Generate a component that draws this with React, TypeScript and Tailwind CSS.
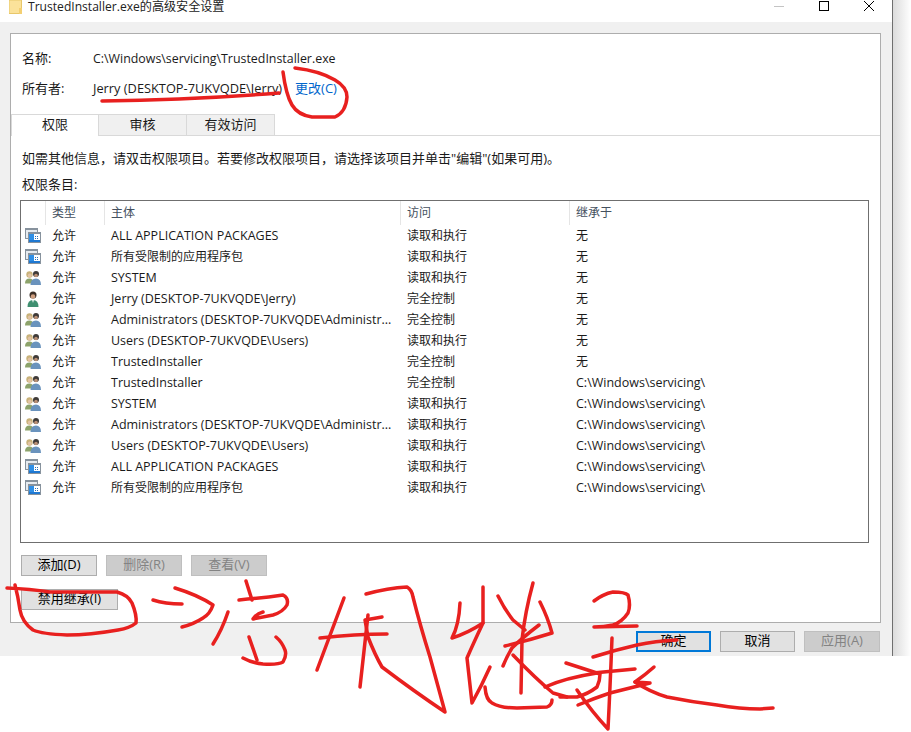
const ALL = 'ALL APPLICATION PACKAGES'
const LIMITED = '所有受限制的应用程序包'
const ADMINS = 'Administrators (DESKTOP-7UKVQDE\\Administr...'
const USERS = 'Users (DESKTOP-7UKVQDE\\Users)'
const READ = '读取和执行'
const FULL = '完全控制'
const PARENT = 'C:\\Windows\\servicing\\'

type Kind = 'app' | 'group' | 'user'

const rows: { kind: Kind; name: string; access: string; from: string }[] = [
  { kind: 'app', name: ALL, access: READ, from: '无' },
  { kind: 'app', name: LIMITED, access: READ, from: '无' },
  { kind: 'group', name: 'SYSTEM', access: READ, from: '无' },
  { kind: 'user', name: 'Jerry (DESKTOP-7UKVQDE\\Jerry)', access: FULL, from: '无' },
  { kind: 'group', name: ADMINS, access: FULL, from: '无' },
  { kind: 'group', name: USERS, access: READ, from: '无' },
  { kind: 'group', name: 'TrustedInstaller', access: FULL, from: '无' },
  { kind: 'group', name: 'TrustedInstaller', access: FULL, from: PARENT },
  { kind: 'group', name: 'SYSTEM', access: READ, from: PARENT },
  { kind: 'group', name: ADMINS, access: READ, from: PARENT },
  { kind: 'group', name: USERS, access: READ, from: PARENT },
  { kind: 'app', name: ALL, access: READ, from: PARENT },
  { kind: 'app', name: LIMITED, access: READ, from: PARENT },
]

// hand-written marks over the screenshot
const strokes = [
  'M102 101 Q190 100 279 93',
  'M283 72 Q286 95 292 105 Q298 115 312 117 L335 117 Q346 112 347 97 Q347 87 335 80 Q320 71 295 68',
  'M7 588 Q30 589 50 592 L117 592 Q128 595 132 603 Q137 615 136 623 Q130 628 118 630 Q90 635 67 635 Q42 634 33 630 Q22 622 20 610 Q18 596 15 585',
  'M153 600 Q165 604 182 604',
  'M175 588 Q198 595 213 605 Q210 614 203 618 Q194 624 182 627',
  'M228 612 Q222 630 213 644',
  'M246 581 L252 600',
  'M239 600 Q262 598 283 595 Q289 598 287 605 Q283 612 273 615 L253 619 Q256 614 263 612',
  'M249 637 L257 660',
  'M243 658 Q252 663 263 664 Q278 665 283 662 Q287 655 285 650 Q282 642 276 637',
  'M344 598 Q330 635 317 670',
  'M320 638 Q355 634 387 634',
  'M366 594 Q388 588 407 587 Q412 590 413 597 Q420 625 430 657 L445 712 Q415 692 382 667 Q375 655 368 637 L365 620 L382 617',
  'M368 615 L360 687',
  'M460 603 Q459 625 452 638 Q468 633 483 623',
  'M483 587 L483 623 Q474 642 467 658 L472 703 Q482 685 490 667',
  'M485 687 Q486 700 492 703 Q500 708 517 708 L547 707 Q552 705 552 700',
  'M498 596 Q505 610 513 620 L525 630',
  'M533 583 Q525 612 522 640 L521 693',
  'M540 602 Q548 618 552 633 Q530 640 505 646',
  'M539 625 Q522 638 512 648 Q507 656 503 666',
  'M513 655 Q535 678 553 693 L567 697',
  'M545 687 Q565 678 597 673',
  'M594 601 Q603 594 613 592 Q625 592 628 595 Q631 605 628 613 Q622 622 613 625 Q604 627 594 627 L637 626',
  'M593 657 Q615 650 637 645 Q655 641 677 640',
  'M612 638 Q610 690 608 729 Q592 712 577 690',
  'M566 663 L600 674 Q600 681 597 687 Q588 694 577 697 L560 697',
  'M593 673 L635 669',
  'M578 705 Q595 698 610 693 L650 683 L635 682 Q645 675 654 667',
  'M635 682 Q650 692 667 697 Q692 702 717 705 Q740 709 760 709 L773 708',
]

function AppIcon() {
  return (
    <svg className="h-4 w-4" viewBox="0 0 16 16">
      <rect fill="#e6ebf0" height="10" stroke="#87929d" width="12" x="0.5" y="0.5" />
      <rect fill="#87929d" height="1" width="11" x="1" y="1" />
      <rect fill="#fff" height="10" stroke="#87929d" width="12" x="3.5" y="4.5" />
      <rect fill="#87929d" height="1" width="11" x="4" y="5" />
      <rect fill="#2f8fe6" height="6" width="5" x="4" y="6" />
      <rect fill="#1f78d1" height="2" width="11" x="4" y="12" />
      <rect fill="#2b6fb8" height="1" width="1" x="10" y="8" />
      <rect fill="#2b6fb8" height="1" width="1" x="12" y="8" />
      <rect fill="#2b6fb8" height="1" width="1" x="10" y="10" />
      <rect fill="#2b6fb8" height="1" width="1" x="12" y="10" />
    </svg>
  )
}

function GroupIcon() {
  return (
    <svg className="h-4 w-4" viewBox="0 0 16 16">
      <circle cx="4.500" cy="4.500" fill="#c9b27a" r="3.200" />
      <circle cx="4.800" cy="5.500" fill="#e2c3a4" r="2" />
      <path d="M0 13.500 Q0 8.500 4.500 8.500 Q8 8.500 8.500 12 L8.500 13.500 Z" fill="#8da36b" />
      <circle cx="11" cy="4" fill="#3e3a38" r="3" />
      <circle cx="11" cy="5.500" fill="#b98f74" r="1.800" />
      <path d="M5.500 15 Q5.500 8.500 11 8.500 Q16 8.500 16 15 Z" fill="#6a93bd" />
    </svg>
  )
}

function UserIcon() {
  return (
    <svg className="h-4 w-4" viewBox="0 0 16 16">
      <circle cx="8" cy="4" fill="#3d3028" r="3.500" />
      <circle cx="8" cy="5.500" fill="#cf9f80" r="2.300" />
      <path d="M2.500 16 Q2.500 9 8 9 Q13.500 9 13.500 16 Z" fill="#3f8f70" />
      <path d="M7 9 H9 L8 12 Z" fill="#e8f3ee" />
    </svg>
  )
}

function Btn({
  label,
  disabled,
  primary,
  className,
}: {
  label: string
  disabled?: boolean
  primary?: boolean
  className: string
}) {
  let tone = 'border border-[#adadad] bg-[#e1e1e1] text-black'
  if (disabled) tone = 'border border-[#bfbfbf] bg-[#cccccc] text-[#838383]'
  if (primary) tone = 'border-2 border-[#0078d7] bg-[#e1e1e1] text-black'
  return (
    <div className={`flex h-[21px] items-center justify-center pb-px text-[13px] ${tone} ${className}`}>
      {label}
    </div>
  )
}

function Tab({ label, active }: { label: string; active?: boolean }) {
  return active ? (
    <div className="-mb-px flex h-[22px] w-[88px] items-center justify-center border border-b-0 border-[#d9d9d9] bg-white pb-px">
      {label}
    </div>
  ) : (
    <div className="flex h-[21px] w-[88px] items-center justify-center border border-b-0 border-l-0 border-[#d9d9d9] bg-[#f0f0f0] pb-px">
      {label}
    </div>
  )
}

export default function App() {
  return (
    <div
      className="relative h-[732px] w-[911px] overflow-hidden bg-white text-[13px] text-[#1a1a1a]"
      style={{ fontFamily: '"Open Sans", "Noto Sans CJK SC", sans-serif' }}
    >
      <div className="flex h-[656px]">
        <div className="flex w-[893px] flex-col border-r border-[#6f6f6f] bg-[#f0f0f0]">
          <div className="flex h-[22px] items-start bg-white">
            <svg className="ml-[9px] h-[14px] w-[13px]" viewBox="0 0 13 14">
              <path d="M0 0 H12.500 V13.500 H0 Z" fill="#fbe29a" stroke="#e8c76a" />
              <path d="M10 8 H13 V14 H10 Z" fill="#f3cf72" />
            </svg>
            <span className="ml-[6px] text-[12.1px] leading-[14px] text-[#222]">
              TrustedInstaller.exe的高级安全设置
            </span>
            <div className="ml-auto flex h-[12px] items-center">
              <span className="h-px w-[10px] bg-[#c4c4c4]" />
              <span className="ml-[35px] h-[10px] w-[10px] border border-black" />
              <svg className="ml-[35px] mr-[18px] h-[10px] w-[10px]" viewBox="0 0 10 10">
                <path d="M0 0 L10 10 M10 0 L0 10" stroke="#000" />
              </svg>
            </div>
          </div>
          <div className="ml-[10px] mt-[11px] flex h-[590px] w-[871px] flex-col border border-[#adadad] bg-white">
            <div className="flex h-[80px] flex-col pl-[11px] pt-[14px]">
              <div className="flex h-[21px] items-center">
                <span className="w-[71px]">名称:</span>
                <span className="pt-px text-[12.4px]">C:\Windows\servicing\TrustedInstaller.exe</span>
              </div>
              <div className="mt-[9px] flex h-[21px] items-center">
                <span className="w-[71px]">所有者:</span>
                <span className="text-[12.8px]">Jerry (DESKTOP-7UKVQDE\Jerry)</span>
                <span className="ml-[13px] text-[#0066cc]">更改(C)</span>
              </div>
            </div>
            <div className="flex h-[22px] items-end border-b border-[#d9d9d9]">
              <Tab active label="权限" />
              <Tab label="审核" />
              <Tab label="有效访问" />
            </div>
            <div className="mt-[12px] h-[21px] pl-[11px] leading-[21px]">
              如需其他信息，请双击权限项目。若要修改权限项目，请选择该项目并单击"编辑"(如果可用)。
            </div>
            <div className="mt-[5px] h-[21px] pl-[11px] leading-[21px]">权限条目:</div>
            <div className="ml-[9px] mt-[5px] flex h-[343px] w-[849px] flex-col border border-[#6f6f6f] text-[12px]">
              <div className="grid h-[24px] grid-cols-[25px_59px_296px_169px_1fr] text-[#44505e]">
                <span className="border-r border-[#e5e5e5]" />
                <span className="border-r border-[#e5e5e5] pl-[6px] leading-[24px]">类型</span>
                <span className="border-r border-[#e5e5e5] pl-[6px] leading-[24px]">主体</span>
                <span className="border-r border-[#e5e5e5] pl-[6px] leading-[24px]">访问</span>
                <span className="pl-[6px] leading-[24px]">继承于</span>
              </div>
              {rows.map((row, i) => (
                <div
                  className="grid h-[21px] grid-cols-[25px_59px_296px_169px_1fr] items-center"
                  key={i}
                >
                  <span className="pl-[4px]">
                    {row.kind === 'app' && <AppIcon />}
                    {row.kind === 'group' && <GroupIcon />}
                    {row.kind === 'user' && <UserIcon />}
                  </span>
                  <span className="pl-[6px]">允许</span>
                  <span
                    className={
                      row.name === LIMITED
                        ? 'whitespace-nowrap pl-[6px]'
                        : 'whitespace-nowrap pl-[6px] pt-px text-[12.5px]'
                    }
                  >
                    {row.name}
                  </span>
                  <span className="pl-[6px]">{row.access}</span>
                  <span className={row.from === PARENT ? 'pl-[6px] pt-px text-[12.5px]' : 'pl-[6px]'}>
                    {row.from}
                  </span>
                </div>
              ))}
            </div>
            <div className="ml-[10px] mt-[12px] flex gap-[9px]">
              <Btn className="w-[76px]" label="添加(D)" />
              <Btn className="w-[76px]" disabled label="删除(R)" />
              <Btn className="w-[76px]" disabled label="查看(V)" />
            </div>
            <Btn className="ml-[10px] mt-[13px] w-[97px]" label="禁用继承(I)" />
          </div>
          <div className="mr-[12px] mt-[8px] flex justify-end gap-[9px]">
            <Btn className="w-[75px]" label="确定" primary />
            <Btn className="w-[75px]" label="取消" />
            <Btn className="w-[76px]" disabled label="应用(A)" />
          </div>
        </div>
        <div className="h-full w-[18px] bg-gradient-to-r from-[#dcdcdc] to-white" />
      </div>
      <svg
        className="pointer-events-none absolute left-0 top-0 h-[732px] w-[911px]"
        fill="none"
        stroke="#e8201f"
        strokeLinecap="round"
        strokeLinejoin="round"
        strokeWidth="3.5"
        viewBox="0 0 911 732"
      >
        {strokes.map((d, i) => (
          <path d={d} key={i} />
        ))}
      </svg>
    </div>
  )
}
